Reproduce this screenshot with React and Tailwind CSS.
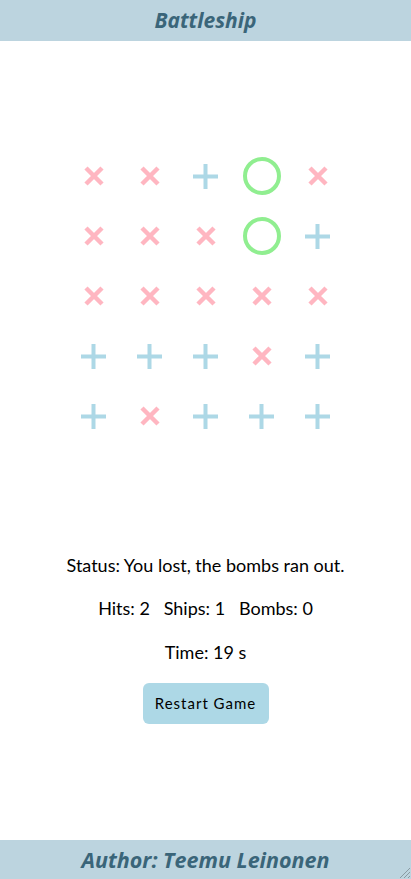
import React from "react";

const board = [
  ["x", "x", "+", "o", "x"],
  ["x", "x", "x", "o", "+"],
  ["x", "x", "x", "x", "x"],
  ["+", "+", "+", "x", "+"],
  ["+", "x", "+", "+", "+"],
];

const Cell = ({ mark }) => {
  if (mark === "x") {
    return (
      <svg width="20" height="20" viewBox="0 0 20 20">
        <path d="M2 2 L18 18 M18 2 L2 18" stroke="#ffb6c1" strokeWidth="4.5" strokeLinecap="butt" />
      </svg>
    );
  }
  if (mark === "+") {
    return (
      <svg width="25" height="25" viewBox="0 0 25 25">
        <path d="M12.5 0 V25 M0 12.5 H25" stroke="#add8e6" strokeWidth="4" />
      </svg>
    );
  }
  return (
    <svg width="40" height="40" viewBox="0 0 40 40">
      <circle cx="20" cy="20" r="17" fill="none" stroke="#90ee90" strokeWidth="4" />
    </svg>
  );
};

const App = () => {
  return (
    <div className="flex flex-col min-h-[879px] bg-white font-['Lato','Open_Sans',sans-serif] text-black">
      <header className="h-[41px] bg-[#bcd4df] flex items-center justify-center">
        <h1 className="font-['Open_Sans',sans-serif] text-[21px] font-bold italic text-[#3a6579] leading-none">Battleship</h1>
      </header>

      <main className="flex-1 flex flex-col items-center">
        <div className="grid grid-cols-5 w-[280px] mt-[105px]">
          {board.flat().map((mark, i) => (
            <div key={i} className="h-[60px] flex items-center justify-center">
              <Cell mark={mark} />
            </div>
          ))}
        </div>

        <p className="mt-[108px] text-[18px] leading-[22px]">Status: You lost, the bombs ran out.</p>
        <p className="mt-[21px] text-[18px] leading-[22px]">
          Hits: 2&nbsp;&nbsp;&nbsp;Ships: 1&nbsp;&nbsp;&nbsp;Bombs: 0
        </p>
        <p className="mt-[22px] text-[18px] leading-[22px]">Time: 19 s</p>
        <button className="mt-[20px] w-[126px] h-[41px] rounded-md bg-[#add8e6] text-[15px] tracking-[1px]">
          Restart Game
        </button>
      </main>

      <footer className="relative h-[39px] bg-[#bcd4df] flex items-center justify-center">
        <p className="font-['Open_Sans',sans-serif] text-[21.5px] font-bold italic text-[#3a6579] leading-none">Author: Teemu Leinonen</p>
        <svg className="absolute right-0 bottom-0" width="14" height="14" viewBox="0 0 14 14">
          <path d="M13 3 L3 13 M13 7 L7 13 M13 11 L11 13" stroke="#8a9aa2" strokeWidth="1" />
        </svg>
      </footer>
    </div>
  );
};

export default App;
